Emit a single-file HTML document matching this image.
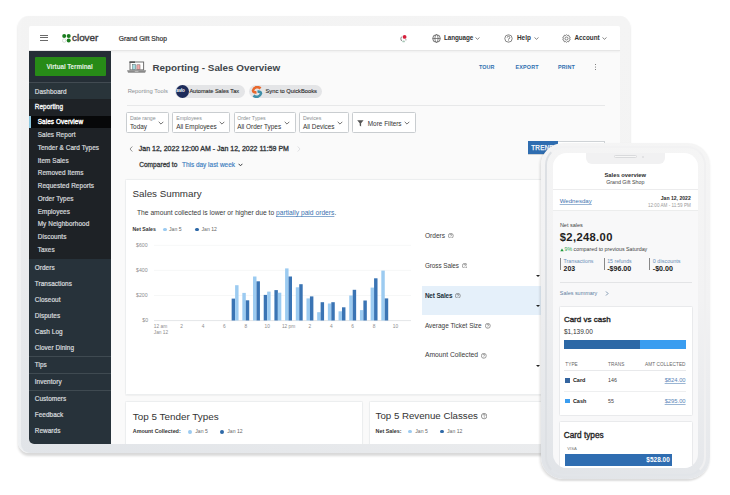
<!DOCTYPE html>
<html><head><meta charset="utf-8">
<style>
*{margin:0;padding:0;box-sizing:border-box}
html,body{width:730px;height:495px;overflow:hidden;background:#fff}
body{position:relative;font-family:"Liberation Sans",sans-serif;color:#333}
.a{position:absolute}
.t{position:absolute;white-space:nowrap;line-height:1}
.b{font-weight:bold}
#frame{left:17.5px;top:15.8px;width:612.3px;height:437px;border-radius:11px;background:linear-gradient(#f4f4f4,#eef0f2);box-shadow:0 2.5px 2.5px rgba(0,0,0,.15),0 0 1px rgba(0,0,0,.05)}
#frame2{left:21px;top:15.8px;width:608.8px;height:437px;border-radius:9px 11px 11px 9px;background:linear-gradient(200deg,#f4f4f4 0%,#f3f3f3 42%,#e1e4e8 100%)}
#screen{left:29px;top:25.5px;width:590.5px;height:418px;background:#fafafa;overflow:hidden;border-radius:2px 2px 2px 5px}
.side{left:0;width:81.5px}
.si{color:#d6d9dc;font-size:6.4px;letter-spacing:.08px;-webkit-text-stroke:.22px #d6d9dc;left:8.7px}
.ss{color:#d3d6d9;font-size:6.4px;letter-spacing:.08px;-webkit-text-stroke:.22px #d3d6d9;left:8.7px}
.sep{left:0;width:81.5px;height:1px;background:#3f4a51}
.fb{border:.7px solid #c9cdd0;border-radius:1.5px;background:#fff}
.fl{font-size:5.2px;color:#8a8f93}
.fv{font-size:6.4px;color:#333}
.chev{width:6px;height:4px}
.card{background:#fff;border:.6px solid #eceeef;border-radius:1.5px;box-shadow:0 .5px 1px rgba(0,0,0,.04)}
.dot{width:3.8px;height:3.8px;border-radius:50%;margin:-.3px 0 0 -.3px}
.yl{font-size:5.2px;color:#8c8c8c;text-align:right}
.xl{font-size:4.8px;color:#8c8c8c}
.mt{font-size:6.3px;color:#3a3a3a}
.q{width:5.6px;height:5.6px}
.tri{width:0;height:0;border-left:2px solid transparent;border-right:2px solid transparent;border-top:2.4px solid #222}
.pc{background:#fff;border:.6px solid #e9eaec;border-radius:1.5px}
.th{font-size:4.7px;color:#666;letter-spacing:.1px}
.lk{font-size:5.8px;color:#5a86b8;text-decoration:underline;text-decoration-color:#9bb6d4;text-decoration-thickness:.5px;text-underline-offset:.8px}
</style></head><body>
<div id="frame" class="a"></div>
<div id="frame2" class="a"></div>
<div id="screen" class="a">
  <!-- header -->
  <div class="a" style="left:0;top:0;width:591px;height:25.2px;background:#fff;border-bottom:1px solid #e6e6e6;box-shadow:0 1px 2px rgba(0,0,0,.05)"></div>
  <!-- hamburger -->
  <div class="a" style="left:11.4px;top:9.5px;width:7.6px;height:1px;background:#6a6a6a"></div>
  <div class="a" style="left:11.4px;top:11.9px;width:7.6px;height:1px;background:#6a6a6a"></div>
  <div class="a" style="left:11.4px;top:14.3px;width:7.6px;height:1px;background:#6a6a6a"></div>
  <!-- clover logo -->
  <svg class="a" style="left:33px;top:8px" width="10" height="10" viewBox="0 0 10 10">
    <circle cx="2.2" cy="2.1" r="2" fill="#1b7d1f"/><circle cx="6.7" cy="2.1" r="2" fill="#1b7d1f"/>
    <circle cx="6.7" cy="6.6" r="2" fill="#1b7d1f"/><circle cx="2.2" cy="6.6" r="1.8" fill="none" stroke="#a9bfaa" stroke-width=".45"/>
  </svg>
  <div class="t" style="left:43px;top:7.6px;font-size:9.9px;color:#3f3f42;-webkit-text-stroke:.4px #3f3f42">clover</div>
  <div class="t" style="left:89.8px;top:10px;font-size:6.67px;color:#333;-webkit-text-stroke:.2px #333">Grand Gift Shop</div>
  <!-- notif -->
  <svg class="a" style="left:370.5px;top:9px" width="8" height="8" viewBox="0 0 8 8">
    <path d="M2.2 1.4C1.2 2 .9 3 .9 3.9 .9 4.8 1.2 5.5 1.8 6" fill="none" stroke="#666" stroke-width=".8"/>
    <circle cx="4.6" cy="1.9" r="1.9" fill="#d51f3b"/>
    <ellipse cx="3.6" cy="6.4" rx="1.4" ry=".9" fill="#a9c8b8"/>
    <path d="M5.9 4.2V5.4" stroke="#666" stroke-width=".7"/>
  </svg>
  <!-- globe -->
  <svg class="a" style="left:402.8px;top:8.4px" width="9" height="9" viewBox="0 0 9 9">
    <circle cx="4.5" cy="4.5" r="3.8" fill="none" stroke="#555" stroke-width=".8"/>
    <ellipse cx="4.5" cy="4.5" rx="1.6" ry="3.8" fill="none" stroke="#555" stroke-width=".7"/>
    <path d="M.8 4.5H8.2" stroke="#555" stroke-width=".7"/>
  </svg>
  <div class="t b" style="left:415px;top:9.4px;font-size:6.35px;letter-spacing:-.1px;color:#333">Language</div>
  <svg class="a" style="left:445.5px;top:11.3px" width="5" height="3" viewBox="0 0 5 3"><path d="M.5 .5L2.5 2.3L4.5 .5" fill="none" stroke="#555" stroke-width=".7"/></svg>
  <!-- help -->
  <svg class="a" style="left:475px;top:8.4px" width="9" height="9" viewBox="0 0 9 9">
    <circle cx="4.5" cy="4.5" r="3.7" fill="none" stroke="#555" stroke-width=".7"/>
    <path d="M3.2 3.6A1.3 1.3 0 1 1 4.5 4.9V5.6" fill="none" stroke="#555" stroke-width=".7"/><circle cx="4.5" cy="6.7" r=".45" fill="#555"/>
  </svg>
  <div class="t b" style="left:488px;top:9.4px;font-size:6.4px;color:#333">Help</div>
  <svg class="a" style="left:504.5px;top:11.3px" width="5" height="3" viewBox="0 0 5 3"><path d="M.5 .5L2.5 2.3L4.5 .5" fill="none" stroke="#555" stroke-width=".7"/></svg>
  <!-- account gear -->
  <svg class="a" style="left:532.5px;top:8.2px" width="9" height="9" viewBox="0 0 9 9">
    <circle cx="4.5" cy="4.5" r="1.5" fill="none" stroke="#555" stroke-width=".7"/>
    <path d="M4.5 .6L5.4 1.5L6.7 1.2L7 2.5L8.2 3.2L7.7 4.5L8.2 5.8L7 6.5L6.7 7.8L5.4 7.5L4.5 8.4L3.6 7.5L2.3 7.8L2 6.5L.8 5.8L1.3 4.5L.8 3.2L2 2.5L2.3 1.2L3.6 1.5Z" fill="none" stroke="#555" stroke-width=".7"/>
  </svg>
  <div class="t b" style="left:545.5px;top:9.4px;font-size:6.35px;letter-spacing:-.05px;color:#333">Account</div>
  <svg class="a" style="left:573px;top:11.3px" width="5" height="3" viewBox="0 0 5 3"><path d="M.5 .5L2.5 2.3L4.5 .5" fill="none" stroke="#555" stroke-width=".7"/></svg>

  <!-- SIDEBAR -->
  <div class="a side" style="top:25.2px;height:31px;background:#252e36"></div>
  <div class="a" style="left:6px;top:31.3px;width:70.7px;height:19px;background:#278b17;border-radius:1px"></div>
  <div class="t b" style="left:17.5px;top:38.5px;font-size:6.35px;letter-spacing:-.08px;color:#e8f3e8">Virtual Terminal</div>
  <div class="a sep" style="top:56px;background:#424b52"></div>
  <div class="a side" style="top:57px;height:17px;background:#29343a"></div>
  <div class="t si" style="left:5.7px;top:63.3px">Dashboard</div>
  <div class="a side" style="top:73.7px;height:159.5px;background:#1e2226"></div>
  <div class="t si" style="left:5.7px;top:78.9px;color:#f4f5f6;-webkit-text-stroke:.3px #f4f5f6">Reporting</div>
  <div class="a side" style="top:90.5px;height:12.2px;background:#070809"></div>
  <div class="a" style="left:0;top:90.5px;width:1.8px;height:12.2px;background:#8cc8e0"></div>
  <div class="t ss" style="top:93.5px;color:#fff;-webkit-text-stroke:.35px #fff">Sales Overview</div>
  <div class="t ss" style="top:106.3px">Sales Report</div>
  <div class="t ss" style="top:119px">Tender &amp; Card Types</div>
  <div class="t ss" style="top:132px">Item Sales</div>
  <div class="t ss" style="top:144.7px">Removed Items</div>
  <div class="t ss" style="top:157.5px">Requested Reports</div>
  <div class="t ss" style="top:170.2px">Order Types</div>
  <div class="t ss" style="top:183px">Employees</div>
  <div class="t ss" style="top:195.8px">My Neighborhood</div>
  <div class="t ss" style="top:208.2px">Discounts</div>
  <div class="t ss" style="top:221px">Taxes</div>
  <div class="a side" style="top:233.2px;height:185px;background:#27323a"></div>
  <div class="t si" style="left:5.7px;top:239px">Orders</div>
  <div class="t si" style="left:5.7px;top:255px">Transactions</div>
  <div class="t si" style="left:5.7px;top:271px">Closeout</div>
  <div class="t si" style="left:5.7px;top:287px">Disputes</div>
  <div class="t si" style="left:5.7px;top:303px">Cash Log</div>
  <div class="t si" style="left:5.7px;top:319px">Clover Dining</div>
  <div class="a sep" style="top:330px"></div>
  <div class="t si" style="left:5.7px;top:336.3px">Tips</div>
  <div class="a sep" style="top:347.2px"></div>
  <div class="t si" style="left:5.7px;top:353.5px">Inventory</div>
  <div class="a sep" style="top:364px"></div>
  <div class="t si" style="left:5.7px;top:370.7px">Customers</div>
  <div class="t si" style="left:5.7px;top:386.6px">Feedback</div>
  <div class="t si" style="left:5.7px;top:402.6px">Rewards</div>

  <!-- MAIN CONTENT (coords relative to screen: x-29, y-25.5) -->
  <!-- report icon -->
  <svg class="a" style="left:97.5px;top:35.3px" width="20" height="13" viewBox="0 0 20 13">
    <rect x="3" y="1" width="13.6" height="7.9" fill="#fff" stroke="#707070" stroke-width="1"/>
    <rect x="2.5" y=".4" width="5.5" height="1.6" fill="#5a5a5a"/>
    <rect x="5.6" y="3.4" width="3" height="5" fill="#a6dde2" stroke="#5a6b6e" stroke-width=".5"/>
    <rect x="9.9" y="3.8" width="3.1" height="4.6" fill="#f1aaaa" stroke="#6e5a5a" stroke-width=".5"/>
    <path d="M0 9.2H19.2L18.1 11.7H1.1z" fill="#8a8a8a"/>
    <rect x="7.8" y="9.9" width="3.6" height=".9" fill="#c4c4c4"/>
  </svg>
  <div class="t b" style="left:123.4px;top:37.7px;font-size:9.9px;color:#41464b">Reporting - Sales Overview</div>
  <div class="t" style="left:98.7px;top:63px;font-size:5.8px;color:#8a8f93">Reporting Tools</div>
  <div class="a" style="left:146.3px;top:59px;width:69.7px;height:13.5px;border-radius:7px;background:#e4e5e7"></div>
  <div class="a" style="left:146.5px;top:59.3px;width:13px;height:13px;border-radius:50%;background:#1d2b5a"></div>
  <div class="t b" style="left:147.3px;top:63.6px;font-size:4.6px;color:#fff;letter-spacing:-.2px">avlo</div>
  <div class="t" style="left:160.4px;top:63.1px;font-size:5.6px;color:#2c2c2c;-webkit-text-stroke:.12px #2c2c2c">Automate Sales Tax</div>
  <div class="a" style="left:220.3px;top:59px;width:72.6px;height:13.5px;border-radius:7px;background:#e4e5e7"></div>
  <svg class="a" style="left:222px;top:60px" width="12" height="12" viewBox="0 0 12 12">
    <path d="M9.5 2.5A4.5 4.5 0 0 0 2 4.5c0 1.5 1.5 2.2 3.5 1.8" fill="none" stroke="#e8692e" stroke-width="2.6"/>
    <path d="M2.5 9.5A4.5 4.5 0 0 0 10 7.5c0-1.5-1.5-2.2-3.5-1.8" fill="none" stroke="#3f8fa8" stroke-width="2.6"/>
  </svg>
  <div class="t" style="left:236.5px;top:63.1px;font-size:5.75px;color:#2c2c2c;-webkit-text-stroke:.12px #2c2c2c">Sync to QuickBooks</div>
  <!-- TOUR EXPORT PRINT -->
  <div class="t b" style="left:449.9px;top:39.4px;font-size:5.4px;color:#2f6fb0;letter-spacing:.15px">TOUR</div>
  <div class="t b" style="left:486.6px;top:39.4px;font-size:5.4px;color:#2f6fb0;letter-spacing:.15px">EXPORT</div>
  <div class="t b" style="left:529px;top:39.4px;font-size:5.4px;color:#2f6fb0;letter-spacing:.15px">PRINT</div>
  <div class="a" style="left:565.6px;top:38.6px;width:1.3px;height:1.3px;background:#5a5a5a;border-radius:50%;box-shadow:0 2.5px 0 #5a5a5a,0 5px 0 #5a5a5a"></div>
  <div class="a" style="left:98px;top:79.6px;width:478px;height:1px;background:#e7e8e9"></div>
  <!-- filters -->
  <div class="a fb" style="left:97.2px;top:86.9px;width:42.4px;height:21px"></div>
  <div class="t fl" style="left:100.9px;top:90.3px">Date range</div>
  <div class="t fv" style="left:100.9px;top:98px">Today</div>
  <svg class="a chev" style="left:128.7px;top:95.8px" viewBox="0 0 6 4"><path d="M.7 .8L3 3.1L5.3 .8" fill="none" stroke="#444" stroke-width=".75"/></svg>
  <div class="a fb" style="left:143.3px;top:86.9px;width:57.9px;height:21px"></div>
  <div class="t fl" style="left:147.2px;top:90.3px">Employees</div>
  <div class="t fv" style="left:147.2px;top:98px">All Employees</div>
  <svg class="a chev" style="left:190.4px;top:95.8px" viewBox="0 0 6 4"><path d="M.7 .8L3 3.1L5.3 .8" fill="none" stroke="#444" stroke-width=".75"/></svg>
  <div class="a fb" style="left:204.9px;top:86.9px;width:62.4px;height:21px"></div>
  <div class="t fl" style="left:208.2px;top:90.3px">Order Types</div>
  <div class="t fv" style="left:208.2px;top:98px">All Order Types</div>
  <svg class="a chev" style="left:255.2px;top:95.8px" viewBox="0 0 6 4"><path d="M.7 .8L3 3.1L5.3 .8" fill="none" stroke="#444" stroke-width=".75"/></svg>
  <div class="a fb" style="left:270.4px;top:86.9px;width:49.2px;height:21px"></div>
  <div class="t fl" style="left:273.9px;top:90.3px">Devices</div>
  <div class="t fv" style="left:273.9px;top:98px">All Devices</div>
  <svg class="a chev" style="left:308.4px;top:95.8px" viewBox="0 0 6 4"><path d="M.7 .8L3 3.1L5.3 .8" fill="none" stroke="#444" stroke-width=".75"/></svg>
  <div class="a fb" style="left:323.1px;top:86.9px;width:63.8px;height:21px"></div>
  <svg class="a" style="left:328.3px;top:94.4px" width="7" height="7" viewBox="0 0 7 7"><path d="M.2 .3h6.4L4.1 3.3v3.1L2.7 5.6V3.3z" fill="#555"/></svg>
  <div class="t fv" style="left:338.8px;top:95.1px">More Filters</div>
  <svg class="a chev" style="left:375.4px;top:95.8px" viewBox="0 0 6 4"><path d="M.7 .8L3 3.1L5.3 .8" fill="none" stroke="#444" stroke-width=".75"/></svg>
  <!-- date nav -->
  <svg class="a" style="left:100px;top:120.5px" width="4" height="6" viewBox="0 0 4 6"><path d="M3.3 .5L1 3L3.3 5.5" fill="none" stroke="#666" stroke-width=".7"/></svg>
  <svg class="a" style="left:267.5px;top:120.8px" width="4" height="6" viewBox="0 0 4 6"><path d="M.7 .5L3 3L.7 5.5" fill="none" stroke="#d4d6d8" stroke-width=".7"/></svg>
  <div class="t" style="left:109.8px;top:119.8px;font-size:7px;color:#2f3337;-webkit-text-stroke:.3px #2f3337">Jan 12, 2022 12:00 AM - Jan 12, 2022 11:59 PM</div>
  <div class="t" style="left:110.2px;top:136.2px;font-size:6.6px;color:#3a3e42;-webkit-text-stroke:.3px #3a3e42">Compared to</div>
  <div class="t" style="left:153px;top:136.2px;font-size:6.45px;color:#3a7cc0;-webkit-text-stroke:.15px #3a7cc0">This day last week</div>
  <svg class="a" style="left:208.6px;top:137px" width="5" height="4" viewBox="0 0 5 4"><path d="M.6 .8L2.5 2.8L4.4 .8" fill="none" stroke="#3a3e42" stroke-width="1"/></svg>
  <!-- TRENDS -->
  <div class="a" style="left:498.7px;top:115px;width:77px;height:14px;border:.6px solid #cfd3d6;background:#fff"></div>
  <div class="a" style="left:498.7px;top:115px;width:30px;height:13.7px;background:#2f6db0"></div>
  <div class="t" style="left:502.2px;top:119.3px;font-size:6.4px;letter-spacing:.25px;color:#fff;-webkit-text-stroke:.25px #fff">TRENDS</div>

  <!-- Sales summary card -->
  <div class="a card" style="left:96px;top:153.8px;width:470px;height:215.9px"></div>
  <div class="t" style="left:103.5px;top:163.5px;font-size:9.8px;color:#333">Sales Summary</div>
  <div class="t" style="left:108px;top:184.5px;font-size:6.7px;color:#3a3a3a">The amount collected is lower or higher due to <span style="color:#3a72b0;text-decoration:underline;text-decoration-color:#86a9d0;text-decoration-thickness:.55px;text-underline-offset:.9px">partially paid orders</span>.</div>
  <div class="t b" style="left:103.5px;top:201.3px;font-size:5.2px;color:#333">Net Sales</div>
  <div class="a dot" style="left:134.6px;top:202.3px;background:#9ccbf1"></div>
  <div class="t" style="left:140px;top:201.5px;font-size:5.1px;color:#666">Jan 5</div>
  <div class="a dot" style="left:166.5px;top:202.3px;background:#2f6aa8"></div>
  <div class="t" style="left:172.5px;top:201.5px;font-size:5.1px;color:#666">Jan 12</div>
  <svg class="a" style="left:0;top:0" width="591" height="418">
    <path d="M125 219.3H382M125 244.4H382M125 269.5H382" stroke="#f0f1f2" stroke-width=".6"/>
    <path d="M125 294.6H382" stroke="#d0d3d6" stroke-width=".6"/>
    <rect x="202.65" y="272.60" width="3.45" height="21.90" fill="#3a74b4"/>
    <rect x="206.10" y="259.20" width="3.45" height="35.30" fill="#9ccbf1"/>
    <rect x="213.34" y="266.90" width="3.45" height="27.60" fill="#9ccbf1"/>
    <rect x="216.79" y="274.30" width="3.45" height="20.20" fill="#3a74b4"/>
    <rect x="224.03" y="250.50" width="3.45" height="44.00" fill="#9ccbf1"/>
    <rect x="227.48" y="255.30" width="3.45" height="39.20" fill="#3a74b4"/>
    <rect x="234.72" y="268.90" width="3.45" height="25.60" fill="#3a74b4"/>
    <rect x="238.17" y="265.60" width="3.45" height="28.90" fill="#9ccbf1"/>
    <rect x="245.41" y="264.10" width="3.45" height="30.40" fill="#3a74b4"/>
    <rect x="248.86" y="266.70" width="3.45" height="27.80" fill="#9ccbf1"/>
    <rect x="256.10" y="242.40" width="3.45" height="52.10" fill="#9ccbf1"/>
    <rect x="259.55" y="250.50" width="3.45" height="44.00" fill="#3a74b4"/>
    <rect x="266.79" y="261.30" width="3.45" height="33.20" fill="#9ccbf1"/>
    <rect x="270.24" y="258.20" width="3.45" height="36.30" fill="#3a74b4"/>
    <rect x="277.48" y="272.40" width="3.45" height="22.10" fill="#9ccbf1"/>
    <rect x="280.93" y="270.40" width="3.45" height="24.10" fill="#3a74b4"/>
    <rect x="288.17" y="286.20" width="3.45" height="8.30" fill="#9ccbf1"/>
    <rect x="291.62" y="276.20" width="3.45" height="18.30" fill="#3a74b4"/>
    <rect x="298.86" y="277.50" width="3.45" height="17.00" fill="#9ccbf1"/>
    <rect x="302.31" y="276.20" width="3.45" height="18.30" fill="#3a74b4"/>
    <rect x="309.55" y="285.30" width="3.45" height="9.20" fill="#9ccbf1"/>
    <rect x="313.00" y="281.30" width="3.45" height="13.20" fill="#3a74b4"/>
    <rect x="320.24" y="269.50" width="3.45" height="25.00" fill="#9ccbf1"/>
    <rect x="323.69" y="263.80" width="3.45" height="30.70" fill="#3a74b4"/>
    <rect x="330.93" y="284.10" width="3.45" height="10.40" fill="#9ccbf1"/>
    <rect x="334.38" y="274.50" width="3.45" height="20.00" fill="#3a74b4"/>
    <rect x="341.62" y="261.60" width="3.45" height="32.90" fill="#9ccbf1"/>
    <rect x="345.07" y="252.30" width="3.45" height="42.20" fill="#3a74b4"/>
    <rect x="352.31" y="244.60" width="3.45" height="49.90" fill="#9ccbf1"/>
    <rect x="355.76" y="272.40" width="3.45" height="22.10" fill="#3a74b4"/>
  </svg>
  <div class="t yl" style="left:107px;top:217.5px">$600</div>
  <div class="t yl" style="left:107px;top:242.6px">$400</div>
  <div class="t yl" style="left:107px;top:267.7px">$200</div>
  <div class="t yl" style="left:113.3px;top:292.9px">$0</div>
  <div class="t xl" style="left:124.8px;top:299.2px">12 am</div>
  <div class="t xl" style="left:124.8px;top:305.3px">Jan 12</div>
  <div class="t xl" style="left:142.65px;width:20px;text-align:center;top:299.2px">2</div>
  <div class="t xl" style="left:164.03px;width:20px;text-align:center;top:299.2px">4</div>
  <div class="t xl" style="left:185.41px;width:20px;text-align:center;top:299.2px">6</div>
  <div class="t xl" style="left:206.79px;width:20px;text-align:center;top:299.2px">8</div>
  <div class="t xl" style="left:228.17px;width:20px;text-align:center;top:299.2px">10</div>
  <div class="t xl" style="left:249.55px;width:20px;text-align:center;top:299.2px">12 pm</div>
  <div class="t xl" style="left:270.93px;width:20px;text-align:center;top:299.2px">2</div>
  <div class="t xl" style="left:292.31px;width:20px;text-align:center;top:299.2px">4</div>
  <div class="t xl" style="left:313.69px;width:20px;text-align:center;top:299.2px">6</div>
  <div class="t xl" style="left:335.07px;width:20px;text-align:center;top:299.2px">8</div>
  <div class="t xl" style="left:356.45px;width:20px;text-align:center;top:299.2px">10</div>
  <!-- right metrics -->
  <div class="t mt" style="left:395.9px;top:207.2px;font-size:6.6px">Orders</div>
  <div class="a q" style="left:419.5px;top:207.8px"><svg width="5.6" height="5.6" viewBox="0 0 6 6" style="position:absolute;left:-.55px;top:-.55px"><circle cx="3" cy="3" r="2.65" fill="none" stroke="#5a5a5a" stroke-width=".6"/><path d="M2.1 2.3C2.1 1.7 2.5 1.4 3 1.4 3.5 1.4 3.9 1.7 3.9 2.2 3.9 2.8 3.1 2.9 3.1 3.6" fill="none" stroke="#5a5a5a" stroke-width=".6"/><circle cx="3.1" cy="4.4" r=".35" fill="#5a5a5a"/></svg></div>
  <div class="t mt" style="left:395.9px;top:237px;font-size:6.35px;letter-spacing:-.05px">Gross Sales</div>
  <div class="a q" style="left:433.2px;top:237.8px"><svg width="5.6" height="5.6" viewBox="0 0 6 6" style="position:absolute;left:-.55px;top:-.55px"><circle cx="3" cy="3" r="2.65" fill="none" stroke="#5a5a5a" stroke-width=".6"/><path d="M2.1 2.3C2.1 1.7 2.5 1.4 3 1.4 3.5 1.4 3.9 1.7 3.9 2.2 3.9 2.8 3.1 2.9 3.1 3.6" fill="none" stroke="#5a5a5a" stroke-width=".6"/><circle cx="3.1" cy="4.4" r=".35" fill="#5a5a5a"/></svg></div>
  <div class="a tri" style="left:507px;top:249.5px"></div>
  <div class="a" style="left:392.7px;top:260.1px;width:180px;height:29.7px;background:#e5f0fa"></div>
  <div class="t mt b" style="left:395.9px;top:267px;font-size:6.35px;letter-spacing:-.12px;color:#22303c">Net Sales</div>
  <div class="a q" style="left:426.7px;top:267.8px"><svg width="5.6" height="5.6" viewBox="0 0 6 6" style="position:absolute;left:-.55px;top:-.55px"><circle cx="3" cy="3" r="2.65" fill="none" stroke="#5a5a5a" stroke-width=".6"/><path d="M2.1 2.3C2.1 1.7 2.5 1.4 3 1.4 3.5 1.4 3.9 1.7 3.9 2.2 3.9 2.8 3.1 2.9 3.1 3.6" fill="none" stroke="#5a5a5a" stroke-width=".6"/><circle cx="3.1" cy="4.4" r=".35" fill="#5a5a5a"/></svg></div>
  <div class="a tri" style="left:507px;top:279.5px"></div>
  <div class="t mt" style="left:395.9px;top:297.3px;font-size:6.45px">Average Ticket Size</div>
  <div class="a q" style="left:456.5px;top:298.2px"><svg width="5.6" height="5.6" viewBox="0 0 6 6" style="position:absolute;left:-.55px;top:-.55px"><circle cx="3" cy="3" r="2.65" fill="none" stroke="#5a5a5a" stroke-width=".6"/><path d="M2.1 2.3C2.1 1.7 2.5 1.4 3 1.4 3.5 1.4 3.9 1.7 3.9 2.2 3.9 2.8 3.1 2.9 3.1 3.6" fill="none" stroke="#5a5a5a" stroke-width=".6"/><circle cx="3.1" cy="4.4" r=".35" fill="#5a5a5a"/></svg></div>
  <div class="t mt" style="left:395.9px;top:326.9px;font-size:6.74px">Amount Collected</div>
  <div class="a q" style="left:452.7px;top:328.0px"><svg width="5.6" height="5.6" viewBox="0 0 6 6" style="position:absolute;left:-.55px;top:-.55px"><circle cx="3" cy="3" r="2.65" fill="none" stroke="#5a5a5a" stroke-width=".6"/><path d="M2.1 2.3C2.1 1.7 2.5 1.4 3 1.4 3.5 1.4 3.9 1.7 3.9 2.2 3.9 2.8 3.1 2.9 3.1 3.6" fill="none" stroke="#5a5a5a" stroke-width=".6"/><circle cx="3.1" cy="4.4" r=".35" fill="#5a5a5a"/></svg></div>
  <div class="a tri" style="left:507px;top:339px"></div>
  <!-- bottom cards -->
  <div class="a card" style="left:96.2px;top:375.2px;width:237.5px;height:60px"></div>
  <div class="t" style="left:103.8px;top:386.0px;font-size:9.9px;color:#333">Top 5 Tender Types</div>
  <div class="t b" style="left:103.8px;top:403.5px;font-size:5.4px;color:#333">Amount Collected:</div>
  <div class="a dot" style="left:159.3px;top:404.6px;background:#9ccbf1"></div>
  <div class="t" style="left:166.3px;top:403.7px;font-size:5.1px;color:#666">Jan 5</div>
  <div class="a dot" style="left:191.3px;top:404.6px;background:#2f6aa8"></div>
  <div class="t" style="left:198.3px;top:403.7px;font-size:5.1px;color:#666">Jan 12</div>
  <div class="a card" style="left:339.6px;top:375.5px;width:240px;height:60px"></div>
  <div class="t" style="left:346.6px;top:385.7px;font-size:9.7px;color:#333">Top 5 Revenue Classes</div>
  <div class="a q" style="left:452.4px;top:388.4px;width:6px;height:6px"><svg width="6.2" height="6.2" viewBox="0 0 6 6" style="position:absolute;left:-.55px;top:-.55px"><circle cx="3" cy="3" r="2.65" fill="none" stroke="#5a5a5a" stroke-width=".6"/><path d="M2.1 2.3C2.1 1.7 2.5 1.4 3 1.4 3.5 1.4 3.9 1.7 3.9 2.2 3.9 2.8 3.1 2.9 3.1 3.6" fill="none" stroke="#5a5a5a" stroke-width=".6"/><circle cx="3.1" cy="4.4" r=".35" fill="#5a5a5a"/></svg></div>
  <div class="t b" style="left:346.6px;top:403.3px;font-size:5.4px;color:#333">Net Sales:</div>
  <div class="a dot" style="left:379.5px;top:404.4px;background:#9ccbf1"></div>
  <div class="t" style="left:386.3px;top:403.5px;font-size:5.1px;color:#666">Jan 5</div>
  <div class="a dot" style="left:411px;top:404.4px;background:#2f6aa8"></div>
  <div class="t" style="left:418px;top:403.5px;font-size:5.1px;color:#666">Jan 12</div>
</div>

<!-- PHONE -->
<div id="phone" class="a" style="left:541.3px;top:142.8px;width:168.7px;height:336.5px;border-radius:22px;background:linear-gradient(200deg,#f5f5f5 0%,#f2f2f3 40%,#e0e3e7 100%);box-shadow:-1.5px 1.5px 2px rgba(0,0,0,.07),0 1.5px 2px rgba(0,0,0,.08)"></div>
<div class="a" style="left:544.8px;top:146.3px;width:161.7px;height:329.5px;border-radius:19px;border:2.6px solid;border-color:#f2f2f3 #f0f0f1 #e2e5e9 #dde0e4"></div>
<div id="pscreen" class="a" style="left:552.6px;top:153.3px;width:145.4px;height:314.7px;border-radius:14px;background:#f8f8f9;overflow:hidden">
  <div class="a" style="left:0;top:0;width:145.4px;height:36.7px;background:#fff;border-bottom:.6px solid #ececed"></div>
  <div class="a" style="left:33.2px;top:-1px;width:79.4px;height:12.1px;background:#f1f1f2;border-radius:0 0 6px 6px"></div>
  <div class="a" style="left:61.7px;top:1.8px;width:22.3px;height:2.6px;background:#f7f7f7;border:.6px solid #d9dadc;border-radius:1.3px"></div>
  <div class="a" style="left:89.2px;top:2.4px;width:2px;height:2px;background:#dcdddf;border-radius:50%"></div>
  <div class="t b" style="left:0;width:145.4px;text-align:center;top:20.2px;font-size:5.8px;color:#2a2a2a">Sales overview</div>
  <div class="t" style="left:0;width:145.4px;text-align:center;top:26.7px;font-size:5.3px;color:#444">Grand Gift Shop</div>
  <div class="a" style="left:0;top:36.7px;width:145.4px;height:21.3px;background:#fff;border-bottom:.6px solid #eceded"></div>
  <div class="t lk" style="left:7.1px;top:44.6px;font-size:6.1px;color:#3f74b0">Wednesday</div>
  <div class="t b" style="right:7.2px;top:42.5px;font-size:5.1px;color:#2a2a2a">Jan 12, 2022</div>
  <div class="t" style="right:7.2px;top:50.4px;font-size:4.6px;color:#9a9a9a">12:00 AM - 11:59 PM</div>
  <!-- net sales -->
  <div class="t" style="left:7.3px;top:70px;font-size:5.5px;color:#444">Net sales</div>
  <div class="t b" style="left:7.2px;top:78.5px;font-size:11.2px;color:#1f1f1f;letter-spacing:.35px">$2,248.00</div>
  <svg class="a" style="left:7.6px;top:94.3px" width="4" height="4" viewBox="0 0 4 4"><path d="M.3 3.3L2 .5L3.7 3.3z" fill="#1e9a3c"/></svg>
  <div class="t" style="left:11.9px;top:93.7px;font-size:5.3px;color:#444"><span style="color:#2ba24a">9%</span> compared to previous Saturday</div>
  <div class="a" style="left:7.6px;top:104.4px;width:.8px;height:12.4px;background:#888"></div>
  <div class="t" style="left:11.0px;top:105.4px;font-size:5.25px;color:#6a8fb8">Transactions</div>
  <div class="t b" style="left:11.0px;top:112.5px;font-size:6.9px;color:#222">203</div>
  <div class="a" style="left:51.1px;top:104.4px;width:.8px;height:12.4px;background:#888"></div>
  <div class="t" style="left:54.6px;top:105.4px;font-size:5.2px;color:#6a8fb8">15 refunds</div>
  <div class="t b" style="left:54.6px;top:112.3px;font-size:7.1px;color:#222">-$96.00</div>
  <div class="a" style="left:96.8px;top:104.4px;width:.8px;height:12.4px;background:#888"></div>
  <div class="t" style="left:100.2px;top:105.4px;font-size:5.5px;color:#6a8fb8">0 discounts</div>
  <div class="t b" style="left:100.2px;top:112.3px;font-size:7.1px;color:#222">-$0.00</div>
  <div class="a" style="left:7.4px;top:128.7px;width:132px;height:.6px;background:#e3e4e6"></div>
  <div class="t" style="left:7.2px;top:138px;font-size:5.45px;color:#5f7f9f">Sales summary</div>
  <svg class="a" style="left:52.4px;top:137.5px" width="4" height="5" viewBox="0 0 4 5"><path d="M1 .5L3 2.5L1 4.5" fill="none" stroke="#5f7f9f" stroke-width=".8"/></svg>
  <!-- card vs cash -->
  <div class="a pc" style="left:6.3px;top:152.3px;width:133.7px;height:110px"></div>
  <div class="t" style="left:11.3px;top:162.6px;font-size:8px;color:#262626;-webkit-text-stroke:.35px #262626">Card vs cash</div>
  <div class="t" style="left:11.3px;top:175.8px;font-size:6.5px;color:#333">$1,139.00</div>
  <div class="a" style="left:11.8px;top:186.7px;width:121.2px;height:8.8px;background:#3a9df0"></div>
  <div class="a" style="left:11.8px;top:186.7px;width:75.2px;height:8.8px;background:#2c68a6"></div>
  <div class="t th" style="left:12.6px;top:210px">TYPE</div>
  <div class="t th" style="left:55.5px;top:210px">TRANS</div>
  <div class="t th" style="right:12.4px;top:210px">AMT COLLECTED</div>
  <div class="a" style="left:11.8px;top:216.7px;width:121.2px;height:.6px;background:#e8e9eb"></div>
  <div class="a" style="left:12.7px;top:225.1px;width:4.4px;height:4.2px;background:#3465a0"></div>
  <div class="t b" style="left:20.3px;top:224.8px;font-size:5.5px;color:#222">Card</div>
  <div class="t" style="left:55.5px;top:224.7px;font-size:5.3px;color:#444">146</div>
  <div class="t lk" style="right:12.4px;top:224.7px">$824.00</div>
  <div class="a" style="left:11.8px;top:237.3px;width:121.2px;height:.6px;background:#eeeff0"></div>
  <div class="a" style="left:12.7px;top:245.9px;width:4.4px;height:4.2px;background:#3a9df0"></div>
  <div class="t b" style="left:20.3px;top:245.6px;font-size:5.5px;color:#222">Cash</div>
  <div class="t" style="left:55.5px;top:245.6px;font-size:5.3px;color:#444">55</div>
  <div class="t lk" style="right:12.4px;top:245.6px">$295.00</div>
  <!-- card types -->
  <div class="a pc" style="left:6.0px;top:267.3px;width:134.1px;height:60px"></div>
  <div class="t" style="left:11.2px;top:278.8px;font-size:8.25px;color:#262626;-webkit-text-stroke:.35px #262626">Card types</div>
  <div class="t" style="left:14.6px;top:293.3px;font-size:4.2px;color:#777">VISA</div>
  <div class="a" style="left:12.5px;top:300.6px;width:107.3px;height:12.3px;background:#2f6db1"></div>
  <div class="t b" style="right:28.2px;top:303.6px;font-size:6.4px;letter-spacing:.05px;color:#fff">$528.00</div>
</div>
</body></html>
